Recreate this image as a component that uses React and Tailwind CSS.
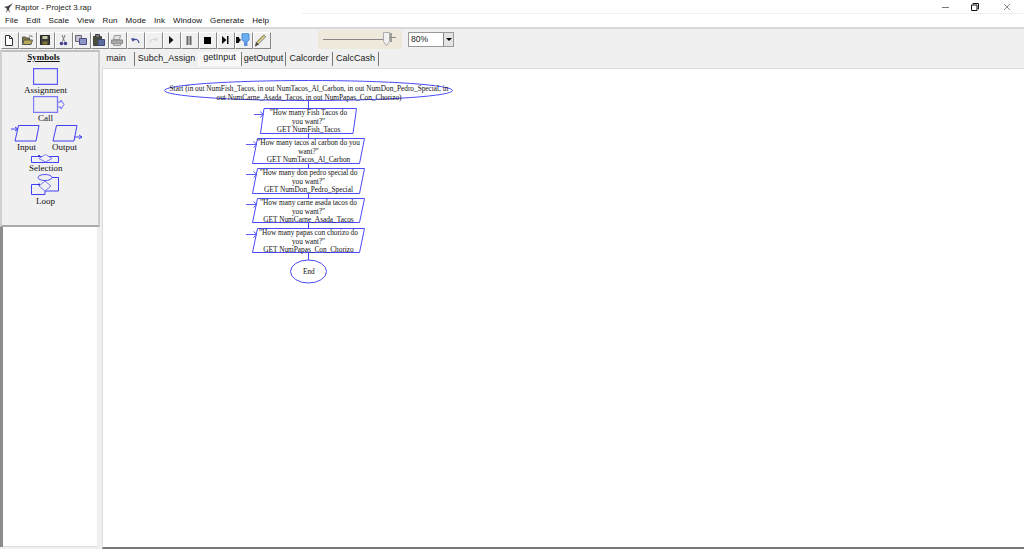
import React from 'react';

const serif = { fontFamily: '"Liberation Serif", serif' };

const menus = ['File', 'Edit', 'Scale', 'View', 'Run', 'Mode', 'Ink', 'Window', 'Generate', 'Help'];

const ToolIcon = ({ name }) => {
  switch (name) {
    case 'new':
      return (
        <svg width="8" height="11" viewBox="0 0 8 11">
          <path d="M.5 .5h4l3 3v7H.5z" fill="#fff" stroke="#333" />
          <path d="M4.500 .5v3h3" fill="none" stroke="#333" />
        </svg>
      );
    case 'open':
      return (
        <svg width="11" height="10" viewBox="0 0 11 10">
          <path d="M.5 2h3l1 1h3v6h-7z" fill="#8a7c3a" stroke="#555" />
          <path d="M2 5h8.500L9 9.500H.5z" fill="#b8a850" stroke="#555" />
          <path d="M7 1.500c1-1 2.500-1 3.500 .5" fill="none" stroke="#666" />
        </svg>
      );
    case 'save':
      return (
        <svg width="10" height="10" viewBox="0 0 10 10">
          <path d="M.5 .5h9v9h-9z" fill="#3c3c3c" stroke="#222" />
          <path d="M2.500 1h5v3h-5z" fill="#c8c8a8" />
          <path d="M2.500 6.500h5v3h-5z" fill="#807830" />
        </svg>
      );
    case 'cut':
      return (
        <svg width="9" height="12" viewBox="0 0 9 12">
          <path d="M3 1l2.500 6.500M6 1L3.500 7.500" stroke="#777" fill="none" />
          <circle cx="2.500" cy="9.500" r="1.800" fill="#44448a" />
          <circle cx="6.500" cy="9.500" r="1.800" fill="#44448a" />
        </svg>
      );
    case 'copy':
      return (
        <svg width="12" height="10" viewBox="0 0 12 10">
          <path d="M.5 .5h6v6h-6z" fill="#c4c4d0" stroke="#666677" />
          <path d="M4.500 3.500h7v6h-7z" fill="#8c96c4" stroke="#4c4c88" />
        </svg>
      );
    case 'paste':
      return (
        <svg width="12" height="12" viewBox="0 0 12 12">
          <path d="M.5 2.500h8v9h-8z" fill="#4a5038" stroke="#444" />
          <path d="M2.500 .5h4v3h-4z" fill="#777" stroke="#444" />
          <path d="M5 5.500h6.500v6H5z" fill="#5c6ea0" stroke="#3c4478" />
        </svg>
      );
    case 'print':
      return (
        <svg width="12" height="11" viewBox="0 0 12 11">
          <path d="M3.500 .5h6l-1 4h-6z" fill="#e4e4e4" stroke="#999" />
          <path d="M.5 5h11v3.500H.5z" fill="#a8a8a8" stroke="#888" />
          <path d="M2.500 8.500h7v2h-7z" fill="#d0d0d0" stroke="#999" />
        </svg>
      );
    case 'undo':
      return (
        <svg width="9" height="7" viewBox="0 0 9 7">
          <path d="M2 3.500c2.500-2 5.500-1.500 6 2.500" fill="none" stroke="#44509a" strokeWidth="1.300" />
          <path d="M0 1.500L3.500 1 2 5z" fill="#44509a" />
        </svg>
      );
    case 'redo':
      return (
        <svg width="9" height="7" viewBox="0 0 9 7">
          <path d="M7 3.500C4.500 1.500 1.500 2 1 6" fill="none" stroke="#d8d8d8" strokeWidth="1.300" />
          <path d="M9 1.500L5.500 1 7 5z" fill="#d8d8d8" />
        </svg>
      );
    case 'play':
      return (
        <svg width="6" height="8" viewBox="0 0 6 8">
          <path d="M1 0l4.500 4L1 8z" fill="#111" />
        </svg>
      );
    case 'pause':
      return (
        <svg width="6" height="9" viewBox="0 0 6 9">
          <path d="M.5 0h2v9h-2zM3.500 0h2v9h-2z" fill="#666" />
        </svg>
      );
    case 'stop':
      return (
        <svg width="7" height="7" viewBox="0 0 7 7">
          <path d="M0 0h7v7H0z" fill="#000" />
        </svg>
      );
    case 'next':
      return (
        <svg width="7" height="8" viewBox="0 0 7 8">
          <path d="M0 0l4.500 4L0 8z" fill="#111" />
          <path d="M5 0h1.500v8H5z" fill="#111" />
        </svg>
      );
    case 'test':
      return (
        <svg width="14" height="14" viewBox="0 0 14 14">
          <path d="M0 4h3v6H0z" fill="#111" />
          <path d="M3 5l2 2-2 2z" fill="#111" />
          <path d="M6 1c2-1 5-1 7 0v6c-1 2-5 2-7 0z" fill="#6ab0f0" stroke="#4a88d8" />
          <path d="M8 8h3.500v5H8z" fill="#5a90e0" />
        </svg>
      );
    default:
      return (
        <svg width="15" height="15" viewBox="0 0 15 15">
          <path d="M1.500 13.500l1-4 8-8 2 2-8 8z" fill="#e8e0a8" stroke="#666" />
          <path d="M3 10l7.500-7.500" stroke="#b09828" />
          <path d="M1.500 13.500l1-4 3 2z" fill="#444" />
        </svg>
      );
  }
};

const tools = ['new', 'open', 'save', 'cut', 'copy', 'paste', 'print', 'undo', 'redo', 'play', 'pause', 'stop', 'next', 'test', 'pen'];

const tabs = [
  { label: 'main', w: 'w-[32px] pr-[5px] border-r border-[#777]' },
  { label: 'Subch_Assign', w: 'w-[63px]' },
  { label: 'getInput', w: 'w-[44px] border-r border-[#777] bg-[#f8f8f8] pb-[3px]' },
  { label: 'getOutput', w: 'w-[44px] border-r border-[#777]' },
  { label: 'Calcorder', w: 'w-[47px] border-r border-[#777]' },
  { label: 'CalcCash', w: 'w-[46px] border-r border-[#777]' },
];

const steps = [
  { top: 108, left: 260, w: 97, h: 26, slant: 3.5, prompt: ['"How many Fish Tacos do', 'you want?"'], get: 'GET NumFish_Tacos' },
  { top: 138, left: 252, w: 113, h: 26, slant: 5, prompt: ['"How many tacos al carbon do you', 'want?"'], get: 'GET NumTacos_Al_Carbon' },
  { top: 168, left: 252, w: 113, h: 26, slant: 5, prompt: ['"How many don pedro special do', 'you want?"'], get: 'GET NumDon_Pedro_Special' },
  { top: 198, left: 252, w: 113, h: 25, slant: 5, prompt: ['"How many carne asada tacos do', 'you want?"'], get: 'GET NumCarne_Asada_Tacos' },
  { top: 228, left: 252, w: 113, h: 25, slant: 5, prompt: ['"How many papas con chorizo do', 'you want?"'], get: 'GET NumPapas_Con_Chorizo' },
];

// blue parallelogram with its entry arrow
const InputNode = ({ step }) => (
  <div
    className="absolute flex flex-col items-center text-center text-[7.300px] leading-[8.500px] text-[#111] pt-[1px] whitespace-nowrap"
    style={{ ...serif, top: step.top, left: step.left, width: step.w, height: step.h }}
  >
    <svg className="absolute left-0 top-0 overflow-visible" width={step.w} height={step.h}>
      <path
        d={`M${step.slant + 0.5} .5H${step.w - 0.5}L${step.w - step.slant - 0.5} ${step.h - 0.5}H.5Z`}
        fill="#fff"
        stroke="#4a4af8"
      />
      <path
        d={`M-6 6.500H${step.slant}M${step.slant - 3.5} 3.500L${step.slant} 6.500 ${step.slant - 3.5} 9.500`}
        fill="none"
        stroke="#5a5af8"
      />
    </svg>
    <span className="relative">{step.prompt[0]}</span>
    <span className="relative">{step.prompt[1]}</span>
    <span className="relative">{step.get}</span>
  </div>
);

export default function App() {
  return (
    <div className="w-[1024px] h-[549px] bg-[#f0f0f0] overflow-hidden flex flex-col" style={{ fontFamily: '"Liberation Sans", sans-serif' }}>
      <div className="bg-white h-[29px] border-b-2 border-[#d8d8d8] flex flex-col shrink-0">
        <div className="h-[15px] flex items-center justify-between relative">
          <div className="flex items-center pl-[3px] gap-[1px] pt-[2px]">
            <svg width="11" height="12" viewBox="0 0 11 12">
              <path d="M1 5l4-1 5-3-3 4-1 2 1 4-2-3-2 3 1-4-1-1z" fill="#444" />
            </svg>
            <span className="text-[8px] text-[#222]">Raptor - Project 3.rap</span>
          </div>
          <div className="flex items-center">
            <div className="w-[30px] flex justify-center">
              <div className="w-[7px] h-[1px] bg-[#777]" />
            </div>
            <div className="w-[30px] flex justify-center">
              <svg width="8" height="8" viewBox="0 0 8 8">
                <path d="M2 1.500V.5h5.500V6H6.500" fill="none" stroke="#111" />
                <path d="M.5 2h5.500v5.500H.5z" fill="#fff" stroke="#111" />
              </svg>
            </div>
            <div className="w-[34px] flex justify-center">
              <svg width="8" height="8" viewBox="0 0 8 8">
                <path d="M1 1l6 6M7 1L1 7" stroke="#888" />
              </svg>
            </div>
          </div>
          <div className="absolute left-[302px] right-0 bottom-0 h-[1px] bg-[#f0f0f0]" />
        </div>
        <div className="flex text-[8px] tracking-[0.1px] text-[#111] gap-[8px] pl-[5px] pt-[1px]">
          {menus.map((m) => (
            <span key={m}>{m}</span>
          ))}
        </div>
      </div>

      <div className="h-[21px] shrink-0 flex items-center pl-[1px] relative">
        {tools.map((t) => (
          <div
            key={t}
            className="w-[18px] h-[17px] mt-[1px] pr-[2px] flex items-center justify-center bg-[#f0f0f0] border-t border-l border-white border-r border-b border-r-[#888] border-b-[#888]"
          >
            <ToolIcon name={t} />
          </div>
        ))}
        <div className="ml-[47px] w-[84px] h-[19px] bg-[#efe9dc] flex items-center pl-[5px] relative">
          <div className="w-[62px] h-[1px] bg-[#888]" />
          <svg className="absolute left-[65px] top-[2px]" width="14" height="15" viewBox="0 0 14 15">
            <path d="M.5 .5h6v9l-3 4-3-4z" fill="#f0f0f0" stroke="#aaa" />
            <path d="M8 1v9" stroke="#555" />
            <path d="M7 5.500h6" stroke="#888" />
          </svg>
        </div>
        <div className="ml-[6px] w-[46px] h-[15px] bg-white border border-[#999] flex items-center justify-between pl-[2px] text-[8.500px] text-[#222]">
          <span>80%</span>
          <div className="w-[10px] h-[13px] bg-[#e4e4e4] border-l border-[#888] flex items-center justify-center">
            <svg width="6" height="3" viewBox="0 0 6 3">
              <path d="M0 0h6L3 3z" fill="#000" />
            </svg>
          </div>
        </div>
      </div>

      <div className="flex-1 flex min-h-0">
        <div className="w-[100px] shrink-0 flex flex-col">
          <div className="h-[177px] shrink-0 relative bg-[#f0f0f0] border-t-2 border-l-2 border-t-[#c0c0c0] border-l-[#d0d0d0] border-b-2 border-b-[#aaa] border-r-2 border-r-[#ccc] text-[9px] text-[#111]" style={serif}>
            <div className="flex flex-col items-center text-center pr-[9px]">
              <span className="font-bold underline leading-[10px] mb-[6px] -ml-[4px]">Symbols</span>
              <svg width="25" height="17" viewBox="0 0 25 17">
                <path d="M.5 .5h24v16H.5z" fill="none" stroke="#5a5af8" strokeWidth="1.300" />
              </svg>
              <span className="leading-[11px]">Assignment</span>
              <svg className="ml-[7px] -mt-[0.5px]" width="32" height="17" viewBox="0 0 32 17">
                <path d="M.5 .5h24v16H.5z" fill="none" stroke="#7a7af8" strokeWidth="1.300" />
                <path d="M25 6h3V4l3 4.500L28 13v-2h-3" fill="none" stroke="#6a6af8" />
              </svg>
              <span className="leading-[11px]">Call</span>
            </div>
            <svg className="absolute left-[9px] top-[73px] overflow-visible" width="72" height="18" viewBox="0 0 72 18">
              <path d="M7.500 .5H28L25 16H4z" fill="none" stroke="#4040f8" />
              <path d="M0 4H7M4 2L7 4 4 6" fill="none" stroke="#4040f8" />
              <path d="M45.500 .5H66L63 16H42z" fill="none" stroke="#4040f8" />
              <path d="M63 12H71M68 10L71 12 68 14" fill="none" stroke="#4040f8" />
            </svg>
            <span className="absolute left-[15px] top-[90px] leading-[11px]">Input</span>
            <span className="absolute left-[50px] top-[90px] leading-[11px]">Output</span>
            <svg className="absolute left-[29px] top-[102px] overflow-visible" width="28" height="9" viewBox="0 0 28 9">
              <path d="M.5 2.500H27.500V8.500H.5Z" fill="none" stroke="#4040f8" />
              <path d="M8 4.500L14.500 .5 21 4.500 14.500 8z" fill="#f0f0f0" stroke="#7a7af8" />
              <circle cx="8" cy="2" r="1" fill="#2020c0" />
            </svg>
            <span className="absolute left-[27px] top-[111px] leading-[11px]">Selection</span>
            <svg className="absolute left-[29px] top-[122px] overflow-visible" width="28" height="21" viewBox="0 0 28 21">
              <ellipse cx="14" cy="3.500" rx="7" ry="3" fill="none" stroke="#5050f8" />
              <path d="M14 6.500V7M21 3.500h6.500V17H14" fill="none" stroke="#4040f8" />
              <path d="M.5 10.500H8M.5 10.500v10H14V17" fill="none" stroke="#4040f8" />
              <path d="M8 12L14 7 20 12 14 17z" fill="#f0f0f0" stroke="#7a7af8" />
              <circle cx="8" cy="10.500" r="1" fill="#2020c0" />
            </svg>
            <span className="absolute left-[34px] top-[144px] leading-[11px]">Loop</span>
          </div>
          <div className="flex-1 flex pb-[2px]">
            <div className="w-[3px] bg-[#8c8c8c]" />
            <div className="w-[94px] bg-white border-b border-[#ddd]" />
          </div>
        </div>

        <div className="flex-1 flex flex-col min-w-0 pl-[2px]">
          <div className="h-[18px] shrink-0 flex items-end text-[9px] text-[#222] pl-[1px] pb-[2px]">
            {tabs.map((t) => (
              <div key={t.label} className={`h-[14px] flex items-center justify-center ${t.w}`}>
                <span>{t.label}</span>
              </div>
            ))}
          </div>
          <div className="flex-1 bg-white border-t border-l border-[#dcdcdc] border-b-2 border-b-[#777] relative overflow-hidden">
            <div className="absolute left-[-103px] top-[-69px] w-[1024px] h-[549px]">
              <svg className="absolute left-0 top-0" width="1024" height="549">
                <path d="M308.500 100v8M308.500 134v4M308.500 164v4M308.500 194v4M308.500 223v5M308.500 253v7" stroke="#4a4af8" />
                <ellipse cx="308.500" cy="90.500" rx="144" ry="10" fill="#fff" stroke="#4a4af8" />
                <ellipse cx="308.500" cy="271.500" rx="18" ry="11.500" fill="#fff" stroke="#4a4af8" />
              </svg>
              <div className="absolute left-[164px] top-[84px] w-[290px] flex flex-col items-center text-[7.300px] leading-[9px] text-[#111] whitespace-nowrap" style={serif}>
                <span>Start (in out NumFish_Tacos, in out NumTacos_Al_Carbon, in out NumDon_Pedro_Special, in</span>
                <span>out NumCarne_Asada_Tacos, in out NumPapas_Con_Chorizo)</span>
              </div>
              {steps.map((s) => (
                <InputNode key={s.get} step={s} />
              ))}
              <span className="absolute left-[303px] top-[267px] text-[7.300px] leading-[9px] text-[#111]" style={serif}>End</span>
            </div>
          </div>
        </div>
      </div>
    </div>
  );
}
